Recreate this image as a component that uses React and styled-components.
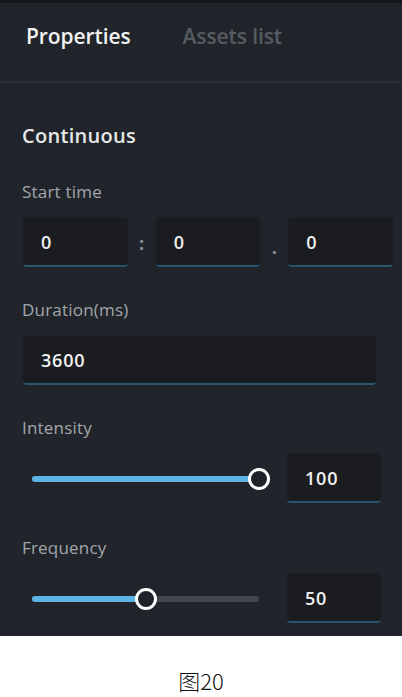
import { createGlobalStyle, styled } from 'styled-components';

const GlobalStyle = createGlobalStyle`
  body {
    margin: 0;
    background: #ffffff;
    font-family: "Open Sans", Lato, sans-serif;
  }
`;

const Page = styled.div`
  width: 402px;
  display: flex;
  flex-direction: column;
`;

const Panel = styled.section`
  height: 636px;
  box-sizing: border-box;
  background: #21252b;
  border-top: 3px solid #15171a;
  display: flex;
  flex-direction: column;
`;

const Tabs = styled.nav`
  height: 80px;
  box-sizing: border-box;
  display: flex;
  gap: 52px;
  padding: 20px 0 0 26px;
  border-bottom: 2px solid #2c3036;
`;

const Tab = styled.span`
  font-size: 21px;
  line-height: 26px;
  font-weight: 600;
  letter-spacing: -0.1px;
  color: ${({ $active }) => ($active ? '#f2f2f2' : '#565b62')};
`;

const Content = styled.div`
  display: flex;
  flex-direction: column;
  padding: 41px 10px 0 22px;
`;

const Title = styled.h2`
  margin: 0 0 34px;
  font-size: 20px;
  line-height: 24px;
  font-weight: 600;
  letter-spacing: 0.3px;
  color: #e8e8e8;
`;

const Field = styled.div`
  display: flex;
  flex-direction: column;
  gap: 16px;
  margin-bottom: ${({ $space }) => $space}px;
`;

const Label = styled.label`
  font-size: 17px;
  line-height: 20px;
  letter-spacing: 0.2px;
  color: #a2a6ac;
`;

const Row = styled.div`
  display: flex;
  align-items: center;
  width: ${({ $width }) => $width}px;
  padding-left: 1px;
`;

const Box = styled.div`
  flex: ${({ $width }) => ($width ? 'none' : '1')};
  width: ${({ $width }) => ($width ? `${$width}px` : 'auto')};
  height: 49px;
  box-sizing: border-box;
  display: flex;
  align-items: center;
  padding-left: 18px;
  background: #1a1c20;
  border-radius: 4px;
  border-bottom: 2px solid #2a5672;
  box-shadow: 0 0 2px rgba(0, 0, 0, 0.35);
  font-size: 18px;
  font-weight: 600;
  letter-spacing: 0.8px;
  color: #f0f0f0;
`;

const Sep = styled.span`
  width: 28px;
  text-align: center;
  font-size: 18px;
  font-weight: 700;
  color: #8a8e94;
  padding-top: ${({ $low }) => ($low ? '8px' : '0')};
`;

const SliderWrap = styled.div`
  flex: 1;
  padding: 0 11px 0 9px;
  margin-right: 17px;
`;

const Track = styled.div`
  position: relative;
  height: 6px;
  border-radius: 3px;
  background: #43474d;
`;

const Fill = styled.div`
  height: 100%;
  border-radius: 3px;
  background: #5db3e6;
`;

const Thumb = styled.div`
  position: absolute;
  top: 50%;
  width: 22px;
  height: 22px;
  box-sizing: border-box;
  border-radius: 50%;
  border: 3px solid #ffffff;
  background: #1f232a;
  transform: translate(-50%, -50%);
`;

const Caption = styled.div`
  height: 61px;
  display: flex;
  align-items: center;
  justify-content: center;
  padding-top: 26px;
  box-sizing: border-box;
  font-family: "Noto Sans CJK SC", "Liberation Sans", sans-serif;
  font-size: 22px;
  font-weight: 300;
  color: #111111;
`;

const Slider = ({ value }) => (
  <SliderWrap>
    <Track>
      <Fill style={{ width: `${value}%` }} />
      <Thumb style={{ left: `${value}%` }} />
    </Track>
  </SliderWrap>
);

const App = () => {
  return (
    <Page>
      <GlobalStyle />
      <Panel>
        <Tabs>
          <Tab $active>Properties</Tab>
          <Tab>Assets list</Tab>
        </Tabs>
        <Content>
          <Title>Continuous</Title>
          <Field $space={33}>
            <Label>Start time</Label>
            <Row $width={370}>
              <Box>0</Box>
              <Sep>:</Sep>
              <Box>0</Box>
              <Sep $low>.</Sep>
              <Box>0</Box>
            </Row>
          </Field>
          <Field $space={33}>
            <Label>Duration(ms)</Label>
            <Row $width={353}>
              <Box>3600</Box>
            </Row>
          </Field>
          <Field $space={35}>
            <Label>Intensity</Label>
            <Row $width={358}>
              <Slider value={100} />
              <Box $width={94}>100</Box>
            </Row>
          </Field>
          <Field $space={0}>
            <Label>Frequency</Label>
            <Row $width={358}>
              <Slider value={50} />
              <Box $width={94}>50</Box>
            </Row>
          </Field>
        </Content>
      </Panel>
      <Caption>图20</Caption>
    </Page>
  );
};

export default App;
